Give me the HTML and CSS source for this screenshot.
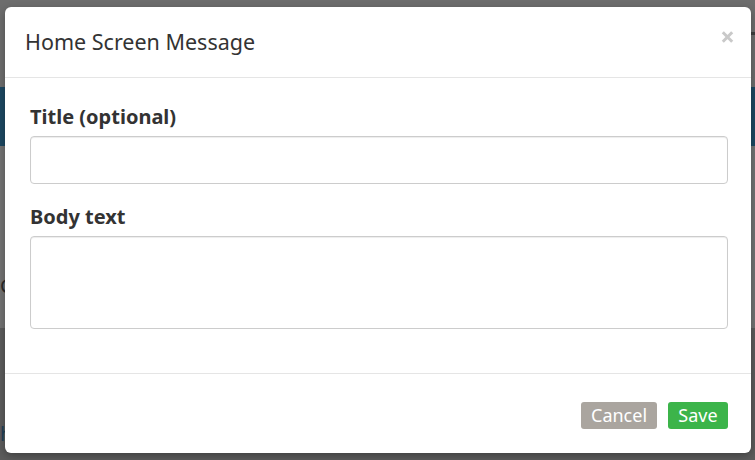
FILE: index.html
```html
<!DOCTYPE html>
<html>
<head>
<meta charset="utf-8">
<link rel="stylesheet" href="styles.css">
</head>
<body>
<div class="page">
  <div class="bg-top"><div class="bg-navline"></div></div>
  <div class="bg-band"></div>
  <div class="bg-main"><span class="bg-text">G</span></div>
  <div class="bg-foot"><span class="bg-text bg-link">h</span></div>
</div>

<div class="modal" role="dialog">
  <div class="modal-header">
    <h4 class="modal-title">Home Screen Message</h4>
    <button class="close" aria-label="Close">
      <svg width="13" height="12" viewBox="0 0 13 12"><path d="M1.8 1.3 L11.2 10.7 M11.2 1.3 L1.8 10.7" stroke="#c9c9c9" stroke-width="3" stroke-linecap="butt" fill="none"/></svg>
    </button>
  </div>
  <div class="modal-body">
    <label class="field-label">Title (optional)</label>
    <input class="field-input" type="text">
    <label class="field-label second">Body text</label>
    <textarea class="field-area"></textarea>
  </div>
  <div class="modal-footer">
    <button class="btn btn-cancel">Cancel</button>
    <button class="btn btn-save">Save</button>
  </div>
</div>
</body>
</html>
```
FILE: styles.css
```css
html, body {
  margin: 0;
  padding: 0;
}
body {
  width: 755px;
  height: 460px;
  overflow: hidden;
  background: #6c6c6c;
  font-family: "Noto Sans", "Open Sans", sans-serif;
  position: relative;
}
.page {
  display: flex;
  flex-direction: column;
  height: 460px;
}
.bg-top {
  height: 87px;
  background: #6d6d6d;
  display: flex;
  flex-direction: column;
}
.bg-navline {
  margin-top: 32px;
  margin-left: 600px;
  height: 3px;
  background: #3e3e3e;
}
.bg-band {
  height: 59px;
  background: #1d4862;
}
.bg-main {
  height: 182px;
  background: #737373;
  display: flex;
  flex-direction: column;
  justify-content: flex-end;
}
.bg-text {
  font-size: 20px;
  color: #2a2a2a;
  line-height: 24px;
  margin-bottom: 30px;
  padding-left: 0;
}
.bg-foot {
  flex: 1;
  background: #5c5c5c;
  display: flex;
  flex-direction: column;
  justify-content: flex-end;
}
.bg-link {
  color: #1f3f58;
  margin-bottom: 14px;
}

.modal {
  position: absolute;
  left: 5px;
  top: 7px;
  width: 746px;
  height: 446px;
  background: #fff;
  border-radius: 6px;
  display: flex;
  flex-direction: column;
  box-shadow: 0 3px 9px rgba(0,0,0,0.3);
}
.modal-header {
  height: 70px;
  border-bottom: 1px solid #e5e5e5;
  padding: 0 20px;
  display: flex;
  align-items: center;
  justify-content: space-between;
}
.modal-title {
  margin: 0;
  font-size: 21.5px;
  font-weight: 400;
  color: #333;
  line-height: 28px;
}
.close {
  align-self: flex-start;
  margin-top: 24px;
  margin-right: -3px;
  padding: 0;
  border: 0;
  background: transparent;
  width: 13px;
  height: 12px;
  display: flex;
}
.modal-body {
  padding: 27px 23px 44px 25px;
  display: flex;
  flex-direction: column;
}
.field-label {
  display: block;
  font-size: 20px;
  font-weight: 700;
  color: #333;
  line-height: 24px;
  margin-bottom: 7px;
}
.field-label.second {
  margin-top: 21px;
}
.field-input, .field-area {
  box-sizing: border-box;
  width: 698px;
  border: 1px solid #cccccc;
  border-radius: 4px;
  box-shadow: inset 0 1px 1px rgba(0,0,0,0.075);
  background: #fff;
  font-family: inherit;
  font-size: 16px;
  margin: 0;
  padding: 6px 12px;
  display: block;
}
.field-input {
  height: 48px;
}
.field-area {
  height: 93px;
  resize: none;
}
.modal-footer {
  border-top: 1px solid #e5e5e5;
  padding: 28px 23px 24px 25px;
  display: flex;
  justify-content: flex-end;
  gap: 11px;
}
.btn {
  height: 27px;
  padding: 0 10px;
  border: 0;
  border-radius: 3px;
  color: #fff;
  font-family: inherit;
  font-size: 18px;
  line-height: 27px;
}
.btn-cancel {
  background: #aaa59f;
  width: 76px;
}
.btn-save {
  background: #3cb44a;
  width: 60px;
}
```
